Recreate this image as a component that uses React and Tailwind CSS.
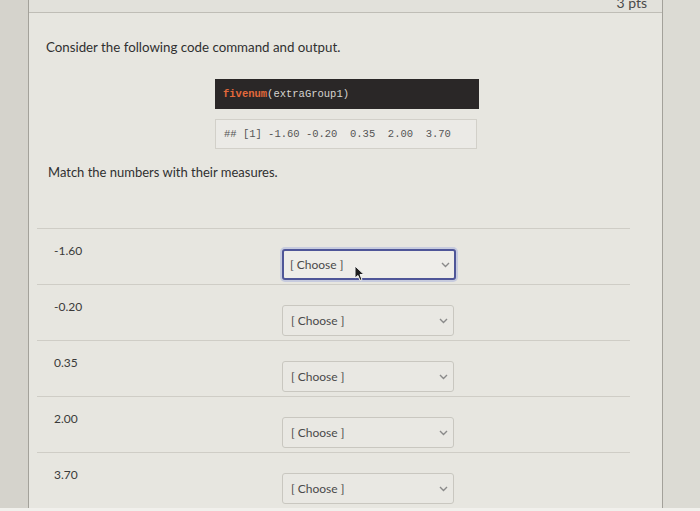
import React from "react";

const rows = ["-1.60", "-0.20", "0.35", "2.00", "3.70"];

function Chevron() {
  return (
    <svg width="9" height="6" viewBox="0 0 9 6" className="shrink-0">
      <path d="M1 1 L4.5 4.5 L8 1" fill="none" stroke="#8a8a8a" strokeWidth="1.4" />
    </svg>
  );
}

function Cursor() {
  return (
    <svg width="11" height="17" viewBox="0 0 11 17" className="absolute left-[70px] top-[14px]">
      <path d="M1 1 L1 13 L4 10.5 L6 15.5 L8 14.5 L6 9.5 L10 9.5 Z" fill="#1e1e1e" stroke="#f2f2f2" strokeWidth="1" />
    </svg>
  );
}

function Select({ focused }) {
  return (
    <div
      className={
        focused
          ? "relative flex h-[31px] w-[174px] items-center justify-between rounded-[3px] border-2 border-[#4f5698] bg-[#eeede9] pl-[6px] pr-[4px] shadow-[0_0_0_2px_rgba(160,170,220,0.45)]"
          : "relative flex h-[31px] w-[172px] items-center justify-between rounded-[3px] border border-[#c9c7c0] bg-[#e9e8e3] pl-[8px] pr-[5px]"
      }
    >
      <span className="text-[12px] leading-[16px] text-[#4a4a4a]">[ Choose ]</span>
      <Chevron />
      {focused && <Cursor />}
    </div>
  );
}

export default function App() {
  return (
    <div
      className="flex h-[511px] w-[700px] flex-col overflow-hidden bg-[#d7d5ce]"
      style={{ fontFamily: "Lato, 'Open Sans', sans-serif" }}
    >
      <div className="flex min-h-0 flex-1">
        <div className="w-[28px] shrink-0 bg-[#d5d3cc]" />
        <div className="flex w-[635px] shrink-0 flex-col border-l border-r border-[#a3a19a] bg-[#e7e6e0]">
          <div className="flex h-[13px] justify-end border-b border-[#bfbdb6] bg-[#e2e1db] pr-[15px]">
            <span className="mt-[-6px] text-[14px] leading-[18px] text-[#4a4a4a]">3 pts</span>
          </div>
          <div className="pl-[17px]">
            <p className="mt-[24px] text-[13.3px] leading-[20px] text-[#303030]">
              Consider the following code command and output.
            </p>
          </div>
          <div className="ml-[186px] mt-[22px] flex h-[32px] w-[264px] items-start bg-[#2a2727] pl-[8px] pt-[8px]">
            <span className="text-[10.5px] leading-[14px]" style={{ fontFamily: "'Liberation Mono', monospace" }}>
              <span className="font-bold text-[#e2693b]">fivenum</span>
              <span className="text-[#d6d4d0]">(extraGroup1)</span>
            </span>
          </div>
          <div className="ml-[186px] mt-[10px] flex h-[33px] w-[262px] items-center border border-[#d2d0c9] bg-[#ebeae6] pl-[8px]">
            <span
              className="whitespace-pre text-[10.5px] leading-[14px] text-[#555]"
              style={{ fontFamily: "'Liberation Mono', monospace" }}
            >
              ## [1] -1.60 -0.20  0.35  2.00  3.70
            </span>
          </div>
          <div className="pl-[19px]">
            <p className="mt-[14px] text-[13px] leading-[18px] text-[#303030]">
              Match the numbers with their measures.
            </p>
          </div>
          <div className="ml-[8px] mt-[47px] w-[593px]">
            {rows.map((r, i) => (
              <div key={r} className="flex h-[56px] border-t border-[#cfcdc6]">
                <div className="w-[245px] shrink-0 pl-[17px] pt-[14px] text-[12px] leading-[16px] text-[#3a3a3a]">
                  {r}
                </div>
                <div className="pt-[20px]">
                  <Select focused={i === 0} />
                </div>
              </div>
            ))}
          </div>
        </div>
        <div className="flex-1 bg-[#dcdbd4]" />
      </div>
      <div className="h-[3px] shrink-0 bg-[#f1f0ec]" />
    </div>
  );
}
